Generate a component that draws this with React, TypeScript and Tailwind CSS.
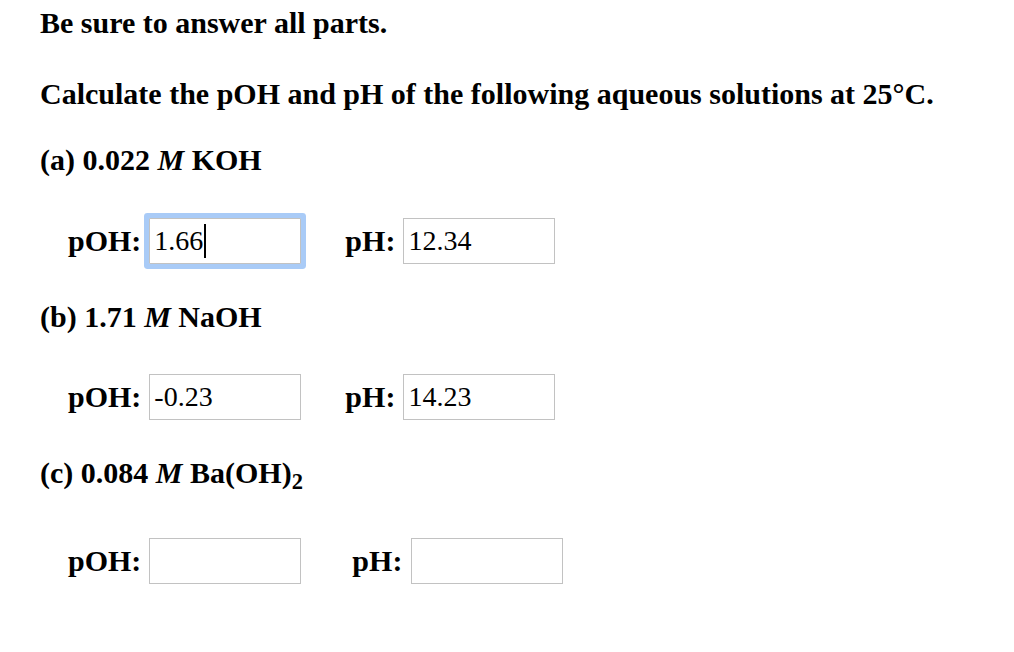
import React from "react";

function Box({ value, focused, caret }: { value: string; focused?: boolean; caret?: boolean }) {
  return (
    <div
      className={
        "flex h-[46px] w-[152px] items-center border border-[#c2c2c2] bg-white pl-[4px] text-[28px] font-normal leading-none text-black " +
        (focused ? "rounded-[1px] shadow-[0_0_0_5px_#a9cbf7]" : "")
      }
    >
      <span>{value}</span>
      {caret ? <span className="ml-[1px] h-[34px] w-[1.5px] bg-black" /> : null}
    </div>
  );
}

function Row({
  poh,
  ph,
  focused,
  caret,
  phGap,
  phLabelGap,
  mt,
}: {
  poh: string;
  ph: string;
  focused?: boolean;
  caret?: boolean;
  phGap: string;
  phLabelGap: string;
  mt: string;
}) {
  return (
    <div className={"flex items-center pl-[28px] " + mt}>
      <span className="leading-[34px]">pOH:</span>
      <div className="ml-[8px]">
        <Box value={poh} focused={focused} caret={caret} />
      </div>
      <span className={"leading-[34px] " + phGap}>pH:</span>
      <div className={phLabelGap}>
        <Box value={ph} />
      </div>
    </div>
  );
}

export default function App() {
  return (
    <div
      className="min-h-[652px] w-[1014px] bg-white pl-[40px] pt-[6px] text-[30px] font-bold text-black"
      style={{ fontFamily: '"Liberation Serif", "Times New Roman", serif' }}
    >
      <p className="leading-[34px]">Be sure to answer all parts.</p>
      <p className="mt-[37px] leading-[34px]">
        Calculate the pOH and pH of the following aqueous solutions at 25°C.
      </p>
      <p className="mt-[32px] leading-[34px]">
        (a) 0.022 <i>M</i> KOH
      </p>
      <Row poh="1.66" ph="12.34" focused caret mt="mt-[41px]" phGap="ml-[44px]" phLabelGap="ml-[8px]" />
      <p className="mt-[36px] leading-[34px]">
        (b) 1.71 <i>M</i> NaOH
      </p>
      <Row poh="-0.23" ph="14.23" mt="mt-[40px]" phGap="ml-[44px]" phLabelGap="ml-[8px]" />
      <p className="mt-[36px] leading-[34px]">
        (c) 0.084 <i>M</i> Ba(OH)<sub>2</sub>
      </p>
      <Row poh="" ph="" mt="mt-[48px]" phGap="ml-[51px]" phLabelGap="ml-[9px]" />
    </div>
  );
}
